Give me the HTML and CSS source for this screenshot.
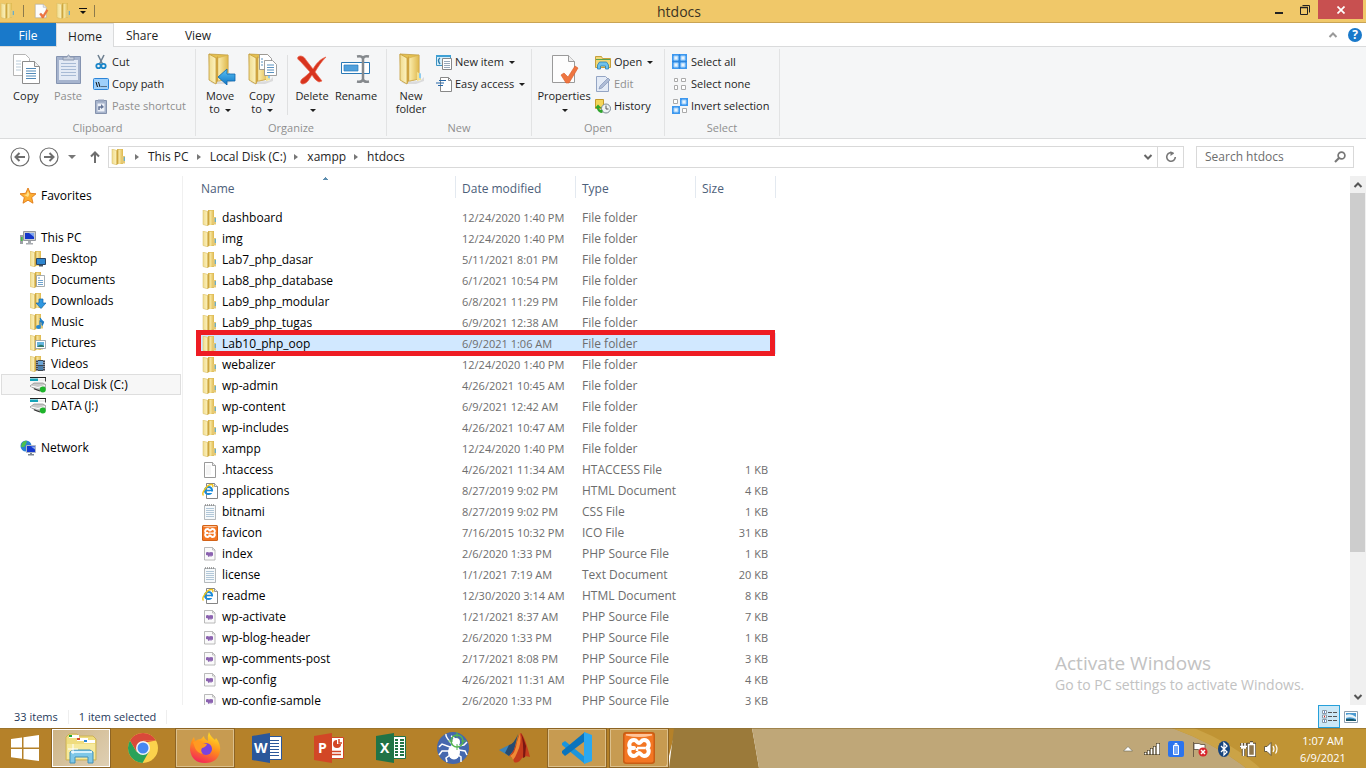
FILE: index.html
```html
<!DOCTYPE html>
<html lang="en">
<head>
  <meta charset="UTF-8" />
  <title>htdocs</title>
  <link rel="stylesheet" href="styles.css">
</head>
<body>
  <!-- shared icons -->
  <svg class="sprite" aria-hidden="true">
    <defs>
      <linearGradient id="gold" x1="0" x2="1" y1="0" y2="0">
        <stop offset="0" stop-color="#fbeeb0"/><stop offset="1" stop-color="#dfb84c"/>
      </linearGradient>
      <linearGradient id="pale" x1="0" x2="1" y1="0" y2="0">
        <stop offset="0" stop-color="#f0dc90"/><stop offset="1" stop-color="#fdf3bf"/>
      </linearGradient>
      <linearGradient id="blue" x1="0" x2="0" y1="0" y2="1">
        <stop offset="0" stop-color="#5cc4f5"/><stop offset="1" stop-color="#0f74c4"/>
      </linearGradient>
      <linearGradient id="fire" x1="0.7" x2="0.3" y1="0" y2="1">
        <stop offset="0" stop-color="#ffe226"/><stop offset="0.5" stop-color="#ff8a1c"/><stop offset="1" stop-color="#f4235a"/>
      </linearGradient>
    </defs>
    <symbol id="folder" viewBox="0 0 16 16">
      <path d="M1 1h6v13H1z" fill="#e3c663"/>
      <path d="M6 0h6v15H6z" fill="#d9b54c"/>
      <path d="M1 0l5 1.500V16l-5-1.500z" fill="url(#pale)" stroke="#d6b95f" stroke-width=".5"/>
      <path d="M5.500 2L7.500.8v13.400L5.500 16z" fill="#cda63f"/>
      <path d="M7.500.8L12 .3v14l-4.500.9z" fill="url(#gold)"/>
      <path d="M11 7h3v7.500h-3z" fill="#e5c976"/>
      <path d="M12.800 8h1v4h-1z" fill="#4ba6dc"/>
    </symbol>
    <symbol id="bigfolder" viewBox="0 0 32 32">
      <path d="M6 29l19-1 4-4v4l-8 3H10z" fill="#c9c9c9" opacity=".6"/>
      <path d="M5 1l19 1v24l-9 2L6 26z" fill="#e4c050" stroke="#bb9534" stroke-width=".7"/>
      <path d="M14 5l10-3v24l-10 2z" fill="url(#gold)" stroke="#cda648" stroke-width=".5"/>
      <path d="M5 1l7 4v26l-7-4z" fill="url(#pale)" stroke="#c49c38" stroke-width=".8"/>
      <path d="M12 5l2-2v25l-2 3z" fill="#cfa440"/>
      <path d="M22 19l4 2v6l-4 1z" fill="#f5e190"/>
      <path d="M24 20l2 .6v5l-2-.6z" fill="#8dcbf0"/>
    </symbol>
    <symbol id="page" viewBox="0 0 16 16">
      <path d="M2.500.5h8l3 3v12h-11z" fill="#fff" stroke="#8f8f8f" stroke-width=".9"/>
      <path d="M10.500.5v3h3" fill="#eee" stroke="#8f8f8f" stroke-width=".8"/>
      <path d="M4 3h5v10H4z" fill="#f5f5f5"/>
    </symbol>
    <symbol id="text" viewBox="0 0 16 16">
      <path d="M2.500 1.500h11v14h-11z" fill="#f6f9fb" stroke="#a2a7ab" stroke-width=".8"/>
      <path d="M3 1h10" stroke="#888" stroke-width="1.500" stroke-dasharray="1 1"/>
      <path d="M4 4.500h8M4 6.500h8M4 8.500h8M4 10.500h8M4 12.500h8" stroke="#a9c1d4" stroke-width=".9"/>
    </symbol>
    <symbol id="html" viewBox="0 0 16 16">
      <path d="M4.500.5h8l3 3v12h-11z" fill="#fff" stroke="#777" stroke-width=".9"/>
      <path d="M12.500.5v3h3" fill="#eee" stroke="#777" stroke-width=".7"/>
      <circle cx="6.500" cy="7.500" r="3.600" fill="none" stroke="#1a8ad8" stroke-width="2"/>
      <path d="M3 7.500h7" stroke="#1a8ad8" stroke-width="1.600"/>
      <path d="M8 8.500h4v1.500H8z" fill="#fff"/>
      <path d="M1.500 12.500C-1 10 5 1.500 9.500 1.500c1.700 0 1.700 1.600 1 2.800" fill="none" stroke="#f2c51a" stroke-width="1.400"/>
    </symbol>
    <symbol id="xampp" viewBox="0 0 32 32">
      <rect x="0" y="0" width="32" height="32" rx="3" fill="#c95d14"/>
      <rect x="1.500" y="1.500" width="29" height="29" rx="2" fill="#f37623"/>
      <path d="M3 2h26v1.500q-13 3-26 0z" fill="#ffc59b"/>
      <path d="M11 16H8c-3-2-2-8 3-8 3 0 3 3 5 3s2-3 5-3c5 0 6 6 3 8 3 2 2 8-3 8-3 0-3-3-5-3s-2 3-5 3c-5 0-6-6-3-8z" fill="none" stroke="#fff" stroke-width="4" stroke-linejoin="round"/>
      <path d="M14 16h8M14 16v3" stroke="#fff" stroke-width="2.500"/>
    </symbol>
    <symbol id="php" viewBox="0 0 16 16">
      <path d="M2.500 1.500h8l2.500 2.500v10h-10.500z" fill="#fafafa" stroke="#a8a8a8" stroke-width=".8"/>
      <path d="M10.500 1.500v2.500H13" fill="none" stroke="#a8a8a8" stroke-width=".7"/>
      <path d="M4 6.500q1.500-1 3 0 2-1 4 0v3.300H9.500v1h-1v-1h-1v1H6v-1.300L4 9z" fill="#8b62b0"/>
    </symbol>
    <symbol id="drive" viewBox="0 0 16 16">
      <path d="M0 .5h16" stroke="#222" stroke-width="1"/>
      <path d="M0 2h16v2H0z" fill="#eee"/>
      <path d="M15.500 1v3.500" stroke="#444"/>
      <path d="M0 1.500h8v2.500H0z" fill="#16a3b8"/>
      <path d="M0 9l4-3h9l3 2v3l-5 2H7z" fill="#c9c9c9" stroke="#777" stroke-width=".6"/>
      <path d="M1 9l7 1.500L15 8.500" fill="none" stroke="#fff"/>
      <path d="M4 11.800l6 2.200" stroke="#333" stroke-width="1.200"/>
      <circle cx="12.800" cy="12.500" r="3" fill="#1eb32b"/>
    </symbol>
    <symbol id="propdoc" viewBox="0 0 32 32">
      <path d="M4.500 2.500h16l6 6v21h-22z" fill="#fdfdfd" stroke="#9a9a9a"/>
      <path d="M20.500 2.500v6h6" fill="#eee" stroke="#9a9a9a"/>
      <path d="M13 22l3-2 4 4 7-11 3 2-9 15h-3z" fill="#ee7540" stroke="#d95a26" stroke-width=".6"/>
    </symbol>
  </svg>

  <header class="titlebar">
    <div class="quick">
      <svg class="i16" viewBox="0 0 16 16"><use href="#folder"/></svg>
      <i class="tick"></i>
      <button aria-label="Properties"><svg class="i16"><use href="#propdoc"/></svg></button>
      <button aria-label="New folder"><svg class="i16"><use href="#folder"/></svg></button>
      <button aria-label="Customize"><svg class="mini" viewBox="0 0 8 8"><path d="M0 1.500h8" stroke="#111"/><path d="M1 4h6L4 7z" fill="#111"/></svg></button>
      <i class="tick"></i>
    </div>
    <h1 class="caption">htdocs</h1>
    <div class="window-buttons">
      <button aria-label="Minimize"><svg width="10" height="10" viewBox="0 0 10 10"><path d="M1 7h8v2H1z" fill="#222"/></svg></button>
      <button aria-label="Restore"><svg width="10" height="10" viewBox="0 0 10 10"><path d="M.5 2.500h7v7h-7zM2.500.5h7v7" fill="none" stroke="#222"/><path d="M0 2.500h8" stroke="#222" stroke-width="1.500"/></svg></button>
      <button class="close" aria-label="Close"><svg width="8" height="8" viewBox="0 0 8 8"><path d="M.5.5l7 7M7.500.5l-7 7" stroke="#fff" stroke-width="1.700"/></svg></button>
    </div>
  </header>

  <nav class="tabs">
    <button class="tab file">File</button>
    <button class="tab active">Home</button>
    <button class="tab">Share</button>
    <button class="tab">View</button>
    <div class="tabs-right">
      <button aria-label="Collapse ribbon"><svg width="10" height="8" viewBox="0 0 10 8"><path d="M1.500 6L5 2.500 8.500 6" fill="none" stroke="#999" stroke-width="2"/></svg></button>
      <button class="help" aria-label="Help">?</button>
    </div>
  </nav>

  <section class="ribbon">
    <div class="group clipboard">
      <div class="tools">
        <button class="big">
          <svg viewBox="0 0 32 32"><g fill="#fff" stroke="#8c8c8c"><path d="M3.500 1.500h12l4 4v17h-16z" stroke="#b5b5b5"/><path d="M12.500 8.500h12l5 5v17h-17z"/><path d="M24.500 8.500v5h5" fill="#eee"/></g><path d="M6 8h5M6 11h5M6 14h5M6 17h5" stroke="#b9cbd9"/><path d="M16 15.500h10M16 18h10M16 20.500h10M16 23h10M16 25.500h10" stroke="#5089b8"/></svg>
          <span>Copy</span>
        </button>
        <button class="big" disabled>
          <svg viewBox="0 0 32 32"><path d="M4.500 3.500h24v27h-24z" fill="#a6b4ce" stroke="#8594b1"/><path d="M7 7h19v20H7z" fill="#e3eaf5"/><path d="M9 10.500h15M9 13.500h15M9 16.500h15M9 19.500h15M9 22.500h15" stroke="#a7bad5"/><path d="M11 4h4q1.500-4 3 0h4v3H11z" fill="#c5cddb" stroke="#8b98b0"/></svg>
          <span>Paste</span>
        </button>
        <div class="stack">
          <button class="small"><svg viewBox="0 0 16 16"><path d="M5 1l4.500 9M11 1L6.500 10" stroke="#6f8191" stroke-width="1.600"/><circle cx="5.500" cy="12" r="2.200" fill="none" stroke="#1b86c9" stroke-width="1.800"/><circle cx="10.500" cy="12" r="2.200" fill="none" stroke="#1b86c9" stroke-width="1.800"/></svg>Cut</button>
          <button class="small"><svg viewBox="0 0 16 16"><rect x=".5" y="2.500" width="15" height="11" rx="1" fill="#9ed0fb" stroke="#2b84d8"/><path d="M3 6l1.500 5M5.500 6L7 11" stroke="#111"/><path d="M8.500 10.500h1M10.500 10.500h1M12.500 10.500h1" stroke="#111"/></svg>Copy path</button>
          <button class="small" disabled><svg viewBox="0 0 16 16"><path d="M2.500 2.500h11v13h-11z" fill="#a7b4cc" stroke="#8492ad"/><path d="M4.500 5.500h7v8h-7z" fill="#edf1f8"/><path d="M5 1.500h6v2H5z" fill="#95a3bd"/><path d="M6 12V9h3" fill="none" stroke="#657698" stroke-width="1.500"/><path d="M8 6l3 3-3 2z" fill="#657698"/></svg>Paste shortcut</button>
        </div>
      </div>
      <h2>Clipboard</h2>
    </div>

    <div class="group organize">
      <div class="tools">
        <button class="big">
          <svg viewBox="0 0 32 32"><use href="#bigfolder"/><path d="M14 24l9-8v5h8v7h-8v4z" fill="url(#blue)" stroke="#0c65ad" stroke-width=".8"/></svg>
          <span>Move<br>to <i class="caret"></i></span>
        </button>
        <button class="big">
          <svg viewBox="0 0 32 32"><use href="#bigfolder" x="-2"/><g fill="#fff" stroke="#888" stroke-width=".8"><path d="M13.500 1.500h8l4 4v11h-12z"/><path d="M18.500 7.500h8l4 4v11h-12z"/></g><path d="M21 12h7M21 14.500h7M21 17h7M21 19.500h7M15 6h2M15 9h2M15 12h2" stroke="#5b92c0"/></svg>
          <span>Copy<br>to <i class="caret"></i></span>
        </button>
        <i class="rule"></i>
        <button class="big">
          <svg viewBox="0 0 32 32"><path d="M2 4c2-2 6-1 8 3l7 9c3-5 7-10 13-12-5 5-8 10-11 15l7 9-3 1c-4-2-5-4-7-7-3 4-4 8-9 9-3 0-3-3-1-5 3-2 6-5 8-7L4 8C2 7 1 5 2 4z" fill="#d8341e" stroke="#e9664d" stroke-width=".7"/></svg>
          <span>Delete<br><i class="caret"></i></span>
        </button>
        <button class="big">
          <svg viewBox="0 0 32 32"><path d="M1.500 9.500h28v11h-28z" fill="#fff" stroke="#2a78b5"/><path d="M4 12h14v6H4z" fill="#4fa0dc" stroke="#2d7dbb" stroke-width=".7"/><path d="M17 3.500q5-1 6 2 1-3 6-2M17 28.500q5 1 6-2 1 3 6 2M23 5v22" fill="none" stroke="#85898d" stroke-width="2.500"/></svg>
          <span>Rename</span>
        </button>
      </div>
      <h2>Organize</h2>
    </div>

    <div class="group new">
      <div class="tools">
        <button class="big">
          <svg viewBox="0 0 32 32"><use href="#bigfolder"/></svg>
          <span>New<br>folder</span>
        </button>
        <div class="stack">
          <button class="small"><svg viewBox="0 0 16 16"><path d="M.5 1.500h14v10H.5z" fill="#d5effb" stroke="#3e94c4"/><path d="M0 1h15v2H0z" fill="#3fa0d4"/><path d="M4 4q-3 2 0 6" fill="none" stroke="#2c7baa" stroke-width="1.500"/><path d="M6.500 4.500h9v11h-9z" fill="#fff" stroke="#888"/><path d="M8 7.500h6M8 9.500h6M8 11.500h6M8 13.500h6" stroke="#9ab"/></svg>New item <i class="caret"></i></button>
          <button class="small"><svg viewBox="0 0 16 16"><path d="M4.500 1.500h8l3 3v11h-11z" fill="#fff" stroke="#888"/><path d="M12.500 1.500v3h3" fill="none" stroke="#888"/><path d="M3 4.500h7M0 7h8M2 9.500h5" stroke="#2667a8" stroke-width="1.200"/></svg>Easy access <i class="caret"></i></button>
        </div>
      </div>
      <h2>New</h2>
    </div>

    <div class="group open">
      <div class="tools">
        <button class="big wide">
          <svg viewBox="0 0 32 32"><use href="#propdoc"/></svg>
          <span>Properties<br><i class="caret"></i></span>
        </button>
        <div class="stack">
          <button class="small"><svg viewBox="0 0 16 16"><path d="M.5 2.500h6l1 2h8v9H.5z" fill="#f1d878" stroke="#c7a03c"/><path d="M1 5.500h14" stroke="#5ba352"/><path d="M2.500 15v-4l2-3h7l2 3v4h-3v-3h-5v3z" fill="#6ec1ec" stroke="#2a80b6" stroke-width=".8"/></svg>Open <i class="caret"></i></button>
          <button class="small" disabled><svg viewBox="0 0 16 16"><path d="M1.500.5h9l3 3v12h-12z" fill="#e4ebf6" stroke="#94a5c4"/><path d="M4 13l1-3 8-8 2 2-8 8z" fill="#aebcd6" stroke="#8395b7" stroke-width=".7"/></svg>Edit</button>
          <button class="small"><svg viewBox="0 0 16 16"><path d="M.5 1.500h8v9h-8z" fill="#f3d559" stroke="#c59a2b"/><circle cx="11" cy="10.500" r="4.500" fill="#eef3f6" stroke="#778791"/><path d="M11 7.500v3.500h2.500" fill="none" stroke="#555"/><path d="M1 9h2.500q0 3 4 3v3q-5 0-6-6M0 10l3-3.500L6.500 10z" fill="#2fa42d"/></svg>History</button>
        </div>
      </div>
      <h2>Open</h2>
    </div>

    <div class="group select">
      <div class="tools">
        <div class="stack">
          <button class="small"><svg viewBox="0 0 16 16"><path d="M0 0h15v15H0z" fill="#3d98ef"/><g fill="#e8f4fe" stroke="#9ccdf8"><path d="M2 2h4v4H2zM9 2h4v4H9zM2 9h4v4H2zM9 9h4v4H9z"/></g><path d="M7.500 0v15M0 7.500h15" stroke="#2f86dc"/></svg>Select all</button>
          <button class="small"><svg viewBox="0 0 16 16"><path d="M2.500 2.500h3v3h-3zM9.500 2.500h4v3h-4zM2.500 9.500h3v4h-3zM9.500 9.500h4v4h-4z" fill="#fff" stroke="#aaa"/></svg>Select none</button>
          <button class="small"><svg viewBox="0 0 16 16"><path d="M8 0h8v8H8zM0 8h8v8H0z" fill="#3d98ef"/><path d="M10 2h4v4h-4zM2 10h4v4H2z" fill="#e8f4fe" stroke="#9ccdf8"/><path d="M1.500 1.500h4v4h-4zM10.500 10.500h4v4h-4z" fill="#fff" stroke="#aaa"/></svg>Invert selection</button>
        </div>
      </div>
      <h2>Select</h2>
    </div>
  </section>

  <div class="addressbar">
    <button aria-label="Back"><svg width="20" height="20" viewBox="0 0 20 20"><circle cx="10" cy="10" r="9" fill="#fff" stroke="#6e6e6e" stroke-width="1.200"/><path d="M15 10H6M9.500 6L5.500 10l4 4" fill="none" stroke="#6e6e6e" stroke-width="2"/></svg></button>
    <button aria-label="Forward"><svg width="20" height="20" viewBox="0 0 20 20"><circle cx="10" cy="10" r="9" fill="#fff" stroke="#6e6e6e" stroke-width="1.200"/><path d="M5 10h9M10.500 6l4 4-4 4" fill="none" stroke="#6e6e6e" stroke-width="2"/></svg></button>
    <button aria-label="Recent locations"><svg width="8" height="8" viewBox="0 0 8 8"><path d="M0 2h8L4 6z" fill="#777"/></svg></button>
    <button class="up" aria-label="Up"><svg width="12" height="14" viewBox="0 0 12 14"><path d="M6 13V3M2 6.500L6 2.500l4 4" fill="none" stroke="#6e6e6e" stroke-width="2"/></svg></button>
    <div class="path">
      <svg class="i16"><use href="#folder"/></svg>
      <i class="crumb-arrow"></i><a href="#">This PC</a>
      <i class="crumb-arrow"></i><a href="#">Local Disk (C:)</a>
      <i class="crumb-arrow"></i><a href="#">xampp</a>
      <i class="crumb-arrow"></i><a href="#">htdocs</a>
      <button class="history" aria-label="Previous locations"><svg width="10" height="8" viewBox="0 0 10 8"><path d="M1.500 2L5 5.500 8.500 2" fill="none" stroke="#666" stroke-width="2"/></svg></button>
      <button class="refresh" aria-label="Refresh"><svg width="12" height="12" viewBox="0 0 12 12"><path d="M8.500 2.500A4.300 4.300 0 1 0 10.300 6" fill="none" stroke="#777" stroke-width="1.600"/><path d="M5.500 0v5L9 2.500z" fill="#777"/></svg></button>
    </div>
    <div class="search">
      <input type="text" aria-label="Search" placeholder="Search htdocs">
      <svg width="12" height="12" viewBox="0 0 12 12"><circle cx="7.500" cy="4.500" r="3.400" fill="none" stroke="#777" stroke-width="1.700"/><path d="M5 7L1 11" stroke="#777" stroke-width="2.200"/></svg>
    </div>
  </div>

  <main class="content">
    <aside class="sidebar">
      <a class="root" href="#"><svg viewBox="0 0 16 16"><path d="M8 0l2.300 5.300 5.700.5-4.300 3.700 1.300 5.700L8 12.200 3 15.200l1.300-5.700L0 5.800l5.700-.5z" fill="#fcae33" stroke="#e07b17" stroke-width=".9"/><path d="M8 3l1.300 3.500L8 9 4 7l2.500-.5z" fill="#ffe08a"/></svg>Favorites</a>

      <a class="root" href="#"><svg viewBox="0 0 16 16"><path d="M3.500 1.500h12v9h-12z" fill="#c9ccd0" stroke="#96999e"/><path d="M5 3h9v6H5z" fill="#1436c9"/><path d="M9 3h5v4z" fill="#7fa5f0"/><path d="M8 11h3v2h2v1.500H6V13h2z" fill="#a7abb0"/><path d="M0 5h3v9H0z" fill="#9ba0a5"/><path d="M1 7h1.500v4H1z" fill="#3fc13c"/></svg>This PC</a>
      <a href="#"><svg viewBox="0 0 16 16"><use href="#folder" x="-1"/><path d="M6.500 7.500h9v6h-9z" fill="#2f86cf" stroke="#2c4563"/><path d="M9 14h4v1.500H9z" fill="#456"/></svg>Desktop</a>
      <a href="#"><svg viewBox="0 0 16 16"><use href="#folder" x="-1"/><path d="M6.500 3.500h8v11h-8z" fill="#fff" stroke="#9099a0" stroke-width=".8"/><path d="M8 6h2M8 8.500h5M8 10.500h5M8 12.500h5" stroke="#6fa3ce"/></svg>Documents</a>
      <a href="#"><svg viewBox="0 0 16 16"><use href="#folder" x="-1"/><path d="M9 6h4v4h3l-5 5.500L6 10h3z" fill="#2e97e0" stroke="#1665ab" stroke-width=".7"/></svg>Downloads</a>
      <a href="#"><svg viewBox="0 0 16 16"><use href="#folder" x="-1"/><path d="M10 4q1 2 3.500 4-.5 2-1.500 3 1-3-2-4v5" fill="#2e97e0" stroke="#1d78c2" stroke-width="1.200"/><ellipse cx="8.500" cy="13" rx="2.500" ry="2" fill="#2388d4"/></svg>Music</a>
      <a href="#"><svg viewBox="0 0 16 16"><use href="#folder" x="-1"/><path d="M5.500 5.500h10v8h-10z" fill="#fff" stroke="#8e979f" stroke-width=".8"/><path d="M7 7h7v5H7z" fill="#66b5df"/><path d="M7 12q3-4 7-1v1z" fill="#2f7a6b"/></svg>Pictures</a>
      <a href="#"><svg viewBox="0 0 16 16"><use href="#folder" x="-1"/><path d="M6 4h9v11H6z" fill="#3c4650"/><path d="M8 5h5v4H8z" fill="#6ba5d6"/><path d="M8 10h5v4H8z" fill="#4c80ad"/><path d="M7 4v11M14 4v11" stroke="#dde" stroke-dasharray="1 1"/></svg>Videos</a>
      <a class="current" href="#"><svg><use href="#drive"/></svg>Local Disk (C:)</a>
      <a href="#"><svg><use href="#drive"/></svg>DATA (J:)</a>

      <a class="root" href="#"><svg viewBox="0 0 16 16"><circle cx="6" cy="6" r="5.500" fill="#2a7fd4"/><path d="M2 3q3-3 5-2l-1 3-2 3-3 0zM6 8l3-2 1 3-3 2z" fill="#4dc04d"/><path d="M6.500 5.500h9v7h-9z" fill="#1638cf" stroke="#b0b8c4"/><path d="M10 13h2v1h2v1.500H8V14h2z" fill="#7b8693"/><path d="M11 6.500h4v3z" fill="#89a9ef"/></svg>Network</a>
    </aside>

    <div class="files">
      <table>
        <thead>
          <tr><th class="name" aria-sort="ascending">Name</th><th class="date">Date modified</th><th class="type">Type</th><th class="size">Size</th></tr>
        </thead>
        <tbody id="rows"></tbody>
      </table>
      <div class="watermark">
        <p class="big-line">Activate Windows</p>
        <p>Go to PC settings to activate Windows.</p>
      </div>
    </div>

    <div class="scrollbar">
      <button aria-label="Scroll up"><svg width="10" height="8" viewBox="0 0 10 8"><path d="M1.500 6L5 2.500 8.500 6" fill="none" stroke="#555" stroke-width="2"/></svg></button>
      <div class="thumb"></div>
      <div class="track"></div>
      <button aria-label="Scroll down"><svg width="10" height="8" viewBox="0 0 10 8"><path d="M1.500 2L5 5.500 8.500 2" fill="none" stroke="#555" stroke-width="2"/></svg></button>
    </div>
  </main>

  <footer class="status">
    <span>33 items</span>
    <span>1 item selected</span>
    <div class="views">
      <button class="on" aria-label="Details view"><svg width="16" height="14" viewBox="0 0 16 14"><path d="M1.500.5h4v3h-4zM1.500 5h4v3h-4zM1.500 9.500h4v3h-4z" fill="#fff" stroke="#8a9aa6"/><path d="M3 2h1M3 11h1" stroke="#2a62b5" stroke-width="1.500"/><path d="M3 6.500h1" stroke="#c22" stroke-width="1.500"/><path d="M7 2.500h4M12 2.500h4M7 6.500h4M12 6.500h4M7 10.500h4M12 10.500h4" stroke="#555"/></svg></button>
      <button aria-label="Large icons view"><svg width="14" height="12" viewBox="0 0 14 12"><path d="M.5.5h13v11H.5z" fill="#fff" stroke="#8fa0b0"/><path d="M2 2h10v8H2z" fill="#4c9bd2"/><path d="M2 4q5-2 10 2v2q-5-3-10-1z" fill="#e8f4fa"/><path d="M2 8q5-1 10 1v1H2z" fill="#175568"/></svg></button>
    </div>
  </footer>

  <div class="taskbar">
    <svg class="wallpaper" viewBox="0 0 1366 40" preserveAspectRatio="none" aria-hidden="true">
      <path d="M0 0h676l-10 40H0z" fill="#b58129"/>
      <path d="M674 0h78l7 40h-90z" fill="#9b7a3a"/>
      <path d="M752 0h440l60 40H759z" fill="#bfa778"/>
      <path d="M1172 0h194v40h-120q-30-24-74-40z" fill="#c09434"/>
      <path d="M1172 0h22q40 16 66 40h-14q-30-24-74-40z" fill="#cba346"/>
      <path d="M0 .5h1366" stroke="#8c6c30" stroke-opacity=".6"/>
    </svg>
    <button class="start" aria-label="Start"><svg width="28" height="26" viewBox="0 0 28 26"><path d="M0 4l11-1.600V12.500H0zM12.500 2.200L28 0v12.500H12.500zM0 14h11v9.700L0 22.200zM12.500 14H28v12l-15.500-2.100z" fill="#fff"/></svg></button>
    <button class="app front" aria-label="File Explorer"><svg viewBox="0 0 32 32"><path d="M1 5l3-3h8l2 2h14l3 3v21H1z" fill="#efdc7e" stroke="#c8ab4a" stroke-width=".8"/><path d="M4 3h10v3H4zM12 6h11v3H12zM19 8h11v3H19z" fill="#fff"/><path d="M4 3h3v2H4z" fill="#23a83a"/><path d="M12 6h3v2h-3z" fill="#d5432a"/><path d="M19 8h3v2h-3z" fill="#2b86d3"/><path d="M2 12h28v15H2z" fill="#f6e99c"/><path d="M5 31V20l3-2h17l3 2v11h-5v-6H10v6z" fill="#7fc8e8" stroke="#4291b8"/><path d="M6 20h21" stroke="#d8f2fc" stroke-width="2"/><path d="M8 12v10M3 17h10" stroke="#fff"/></svg></button>
    <button class="app" aria-label="Chrome"><svg viewBox="0 0 32 32"><circle cx="16" cy="16" r="15" fill="#fbd24c"/><path d="M16 16L3 8.500A15 15 0 0 1 29 8.500H16z" fill="#d9493a"/><path d="M3 8.500A15 15 0 0 0 15.500 31L22 19.500 16 16 9.500 19.700z" fill="#2aa25a"/><path d="M3 8.500l6.500 11 3-8L29 8.500z" fill="#d9493a"/><circle cx="16" cy="16" r="7" fill="#f5f5f5"/><circle cx="16" cy="16" r="5.500" fill="#4688f1"/></svg></button>
    <button class="app running" aria-label="Firefox"><svg viewBox="0 0 32 32"><path d="M20 0q1 4 6 8l1-2q5 6 4 13-2 12-15 12T1 18Q1 10 5 5l1 4q3-2 6-2l3-3q0 3 4 5-1-5 1-9z" fill="url(#fire)"/><circle cx="17" cy="17" r="6" fill="#7a43dd"/><path d="M4 10q7-3 9 1l5 1q-1 3-5 4-2 3 1 6-6-1-8-6z" fill="#ff9a22"/></svg></button>
    <button class="app" aria-label="Word"><svg viewBox="0 0 32 32"><path d="M15.500 4.500h15v23h-15z" fill="#fff" stroke="#2b579a"/><path d="M19 8.500h9M19 11.500h9M19 14.500h9M19 17.500h9M19 20.500h9M19 23.500h9" stroke="#2b579a"/><path d="M1 4l18-3v30L1 28z" fill="#2b579a"/><text x="3" y="21" class="glyph">W</text></svg></button>
    <button class="app" aria-label="PowerPoint"><svg viewBox="0 0 32 32"><path d="M15.500 5.500h15v21h-15z" fill="#fff" stroke="#d24726"/><path d="M20 12a4 4 0 1 0 8 0h-4V8q-4 0-4 4z" fill="#d24726"/><path d="M26 7v4h3M19 19.500h9M19 22.500h9" stroke="#d24726" stroke-width="1.500" fill="none"/><path d="M1 4l18-3v30L1 28z" fill="#d24726"/><text x="5" y="21" class="glyph">P</text></svg></button>
    <button class="app" aria-label="Excel"><svg viewBox="0 0 32 32"><path d="M15.500 4.500h15v22h-15z" fill="#fff" stroke="#217346"/><path d="M20 8h3M20 11h3M20 14h3M20 17h3M20 20h3M20 23h3M25 8h4M25 11h4M25 14h4M25 17h4M25 20h4M25 23h4" stroke="#217346" stroke-width="1.800"/><path d="M1 4l18-3v30L1 28z" fill="#217346"/><text x="5" y="21" class="glyph">X</text></svg></button>
    <button class="app" aria-label="Bug tool"><svg viewBox="0 0 32 32"><circle cx="16" cy="16" r="16" fill="#4568ae"/><path d="M16 13Q8 5 9 2M19 12q0-6-5-8M13 15L5 12 2 15M12 19H5l-3 4M13 23l-4 3 1 4M21 14l6-1 3-3M22 18l6 1 2 4M21 23l3 2v5" fill="none" stroke="#fff" stroke-width="1.500"/><ellipse cx="17" cy="20" rx="6" ry="7.500" fill="#fff"/><circle cx="19" cy="10" r="4" fill="#fff"/><circle cx="20" cy="9" r="6" fill="none" stroke="#55b64f" stroke-width="1.500"/><path d="M20 0v6M20 12v6M11 9h5M24 9h5" stroke="#55b64f"/></svg></button>
    <button class="app" aria-label="MATLAB"><svg viewBox="0 0 32 32"><path d="M0 18l10-5 5 5-5 6z" fill="#3a83b8"/><path d="M10 13q5-1 9-11l-4 16-5 6-4-3z" fill="#274b70"/><path d="M10 24q4-2 8-15 2-8 4-8 4 4 9 24-5-2-8 1-4 6-8 4-1-5-5-6z" fill="#c43c1c"/><path d="M21 1q2 10-3 20-2 5-4 7-1-3-3-4 5-2 7-14z" fill="#f08a35"/><path d="M22 1q3 6 5 13l-1 11-2 1q1-15-2-25z" fill="#7b1712"/></svg></button>
    <button class="app running" aria-label="Visual Studio Code"><svg viewBox="0 0 32 32"><path d="M1 11l3-2 20 16v7L1 13z" fill="#1b95dd"/><path d="M1 21l3 3L24 9V0L1 19z" fill="#0a74bd"/><path d="M23 0l8 3v26l-8 3z" fill="#2ba8f0"/></svg></button>
    <button class="app running" aria-label="XAMPP"><svg><use href="#xampp"/></svg></button>

    <div class="tray">
      <button aria-label="Show hidden icons"><svg viewBox="0 0 16 16"><path d="M3.500 10L8 5.500l4.500 4.500z" fill="#fff" stroke="#665" stroke-width=".6"/></svg></button>
      <button aria-label="Network"><svg viewBox="0 0 16 16"><path d="M0 11h3v3H0zM3 9h3v5H3zM6 7h3v7H6zM9 5h3v9H9zM12 2h4v12h-4z" fill="#5c5138"/><path d="M1 12h1v1H1zM4 10h1v3H4zM7 8h1v5H7zM10 6h1v7h-1zM13 3h2v10h-2z" fill="#fff" stroke="#fff" stroke-width=".6"/></svg></button>
      <button aria-label="Power manager"><svg viewBox="0 0 16 16"><rect width="16" height="16" rx="2" fill="#2c74ee"/><path d="M5.500 4.500h5v9h-5zM7 2.500h2v2H7z" fill="#7aa9f7" stroke="#fff"/></svg></button>
      <button aria-label="Action Center"><svg viewBox="0 0 16 16"><path d="M1.500 1v15M2 2.500h5l2 1h4v6H8l-2-1H2z" fill="#fff" stroke="#5c4c3c" stroke-width=".8"/><circle cx="11" cy="11" r="4.500" fill="#d8262c"/><path d="M9 9l4 4M13 9l-4 4" stroke="#fff" stroke-width="1.500"/></svg></button>
      <button aria-label="Bluetooth"><svg viewBox="0 0 16 16"><ellipse cx="8" cy="8" rx="6" ry="8" fill="#17457e"/><path d="M5 5l6 6-3 3V2l3 3-6 6" fill="none" stroke="#fff" stroke-width="1.300"/></svg></button>
      <button aria-label="Battery"><svg viewBox="0 0 16 16"><g fill="none" stroke="#5c4c32" stroke-width="3.400"><path d="M8.500 3.500h6v11h-6zM10 1.500h3M2 2v3M5 2v3M0 5.500h7M3.500 8v7"/></g><path d="M8.500 3.500h6v11h-6zM10 2h3" fill="#8d754c" stroke="#fff" stroke-width="1.500"/><path d="M2 2v3M5 2v3M0 5.500h7M1 7h5M3.500 8v7" stroke="#fff" stroke-width="1.500"/></svg></button>
      <button aria-label="Volume"><svg viewBox="0 0 16 16"><path d="M.5 5.500H3l4-4v13l-4-4H.5z" fill="#fff" stroke="#5c5138" stroke-width=".9"/><path d="M9 5q2 3 0 6M11.500 3.500q3 4.500 0 9" fill="none" stroke="#fff" stroke-width="1.200"/></svg></button>
      <div class="clock"><time>1:07 AM</time><time>6/9/2021</time></div>
    </div>
  </div>

  <script>
    const files = [
      ["folder", "dashboard", "12/24/2020 1:40 PM", "File folder", ""],
      ["folder", "img", "12/24/2020 1:40 PM", "File folder", ""],
      ["folder", "Lab7_php_dasar", "5/11/2021 8:01 PM", "File folder", ""],
      ["folder", "Lab8_php_database", "6/1/2021 10:54 PM", "File folder", ""],
      ["folder", "Lab9_php_modular", "6/8/2021 11:29 PM", "File folder", ""],
      ["folder", "Lab9_php_tugas", "6/9/2021 12:38 AM", "File folder", ""],
      ["folder", "Lab10_php_oop", "6/9/2021 1:06 AM", "File folder", ""],
      ["folder", "webalizer", "12/24/2020 1:40 PM", "File folder", ""],
      ["folder", "wp-admin", "4/26/2021 10:45 AM", "File folder", ""],
      ["folder", "wp-content", "6/9/2021 12:42 AM", "File folder", ""],
      ["folder", "wp-includes", "4/26/2021 10:47 AM", "File folder", ""],
      ["folder", "xampp", "12/24/2020 1:40 PM", "File folder", ""],
      ["page", ".htaccess", "4/26/2021 11:34 AM", "HTACCESS File", "1 KB"],
      ["html", "applications", "8/27/2019 9:02 PM", "HTML Document", "4 KB"],
      ["text", "bitnami", "8/27/2019 9:02 PM", "CSS File", "1 KB"],
      ["xampp", "favicon", "7/16/2015 10:32 PM", "ICO File", "31 KB"],
      ["php", "index", "2/6/2020 1:33 PM", "PHP Source File", "1 KB"],
      ["text", "license", "1/1/2021 7:19 AM", "Text Document", "20 KB"],
      ["html", "readme", "12/30/2020 3:14 AM", "HTML Document", "8 KB"],
      ["php", "wp-activate", "1/21/2021 8:37 AM", "PHP Source File", "7 KB"],
      ["php", "wp-blog-header", "2/6/2020 1:33 PM", "PHP Source File", "1 KB"],
      ["php", "wp-comments-post", "2/17/2021 8:08 PM", "PHP Source File", "3 KB"],
      ["php", "wp-config", "4/26/2021 11:31 AM", "PHP Source File", "4 KB"],
      ["php", "wp-config-sample", "2/6/2020 1:33 PM", "PHP Source File", "3 KB"]
    ];

    const selected = "Lab10_php_oop";

    document.getElementById("rows").innerHTML = files.map(([icon, name, date, type, size]) => `
      <tr class="${name === selected ? "selected" : ""}">
        <td class="name"><div class="entry"><svg><use href="#${icon}"/></svg>${name}</div></td>
        <td class="date">${date}</td>
        <td>${type}</td>
        <td class="size">${size}</td>
      </tr>`).join("");
  </script>
</body>
</html>
```
FILE: styles.css
```css
* {
  box-sizing: border-box;
}

body {
  margin: 0;
  height: 100vh;
  display: flex;
  flex-direction: column;
  overflow: hidden;
  background: #fff;
  color: #1e1e1e;
  font: 12px/14px "Open Sans", "Noto Sans", sans-serif;
}

button {
  margin: 0;
  padding: 0;
  border: 0;
  background: none;
  font: inherit;
  color: inherit;
  display: flex;
  align-items: center;
  justify-content: center;
}

a {
  color: inherit;
  text-decoration: none;
}

h1, h2, p {
  margin: 0;
  font-weight: normal;
}

svg {
  flex: none;
}

.sprite {
  position: absolute;
  width: 0;
  height: 0;
}

.i16 {
  width: 16px;
  height: 16px;
}

.caret {
  display: inline-block;
  border: 3px solid transparent;
  border-top-color: #1e1e1e;
  border-bottom: 0;
  margin-left: 2px;
}

/* title bar */
.titlebar {
  height: 23px;
  flex: none;
  display: grid;
  grid-template-columns: 1fr auto 1fr;
  background: #f0c869;
  border-bottom: 1px solid #c9a455;
}

.quick {
  display: flex;
  align-items: center;
  gap: 7px;
}

.quick .tick + button {
  padding-left: 2px;
}

.tick {
  width: 1px;
  height: 12px;
  background: #8c7a4c;
}

.mini {
  width: 8px;
  height: 8px;
}

.caption {
  font-size: 14px;
  line-height: 24px;
  height: 22px;
  padding-right: 8px;
  color: #3b3323;
}

.window-buttons {
  display: flex;
  justify-content: flex-end;
  align-items: flex-start;
  padding-right: 3px;
}

.window-buttons button {
  width: 26px;
  height: 19px;
}

.window-buttons .close {
  width: 45px;
  background: #c85050;
}

/* ribbon tabs */
.tabs {
  height: 24px;
  flex: none;
  display: flex;
  border-bottom: 1px solid #dadbdc;
}

.tab {
  width: 56px;
  height: 24px;
  padding-top: 2px;
}

.tab.file {
  height: 23px;
  background: #1979ca;
  color: #fff;
}

.tab.active {
  width: 58px;
  height: 24px;
  background: #f5f6f7;
  border: 1px solid #dadbdc;
  border-bottom: 0;
}

.tabs-right {
  margin-left: auto;
  display: flex;
  align-items: center;
  gap: 10px;
  padding-right: 4px;
}

.help {
  width: 14px;
  height: 14px;
  border-radius: 50%;
  background: #1979ca;
  color: #fff;
  font-weight: bold;
}

/* ribbon */
.ribbon {
  height: 92px;
  flex: none;
  display: flex;
  padding: 2px 0;
  background: #f5f6f7;
  border-bottom: 1px solid #dadbdc;
  font-size: 11px;
}

.group {
  display: flex;
  flex-direction: column;
  justify-content: space-between;
  border-right: 1px solid #e2e3e4;
}

.group h2 {
  font-size: 11px;
  line-height: 16px;
  text-align: center;
  color: #8f8f8f;
}

.clipboard { width: 196px; }
.organize { width: 191px; }
.new { width: 145px; }
.open { width: 133px; }
.select { width: 115px; }

.tools {
  display: flex;
  padding: 2px 0 0 5px;
}

.organize .tools,
.new .tools {
  padding-left: 3px;
}

.big {
  width: 42px;
  flex: none;
  flex-direction: column;
  justify-content: flex-start;
  align-items: center;
  align-self: flex-start;
  gap: 4px;
  padding-top: 2px;
  line-height: 13px;
}

.big.wide {
  width: 54px;
}

.big svg {
  width: 32px;
  height: 32px;
}

.big .caret {
  vertical-align: middle;
}

.rule {
  width: 1px;
  margin: 4px 2px 0 4px;
  background: #dfe0e1;
}

.rule ~ .big {
  width: 44px;
}

.stack {
  display: flex;
  flex-direction: column;
  padding-left: 4px;
}

.select .stack {
  padding-left: 2px;
}

.small {
  height: 22px;
  justify-content: flex-start;
  gap: 3px;
  white-space: nowrap;
}

.small svg {
  width: 16px;
  height: 16px;
}

button:disabled {
  color: #8f8f8f;
}

/* address bar */
.addressbar {
  height: 37px;
  flex: none;
  display: flex;
  align-items: center;
  gap: 9px;
  padding: 0 12px 1px 10px;
}

.up {
  padding-left: 4px;
}

.path {
  flex: 1;
  height: 22px;
  display: flex;
  align-items: center;
  margin-left: -2px;
  padding-left: 2px;
  border: 1px solid #d9d9d9;
}

.crumb-arrow {
  margin: 0 9px 0 8px;
  border: 3px solid transparent;
  border-left: 4px solid #777;
  border-right: 0;
}

.history {
  margin-left: auto;
  width: 18px;
  height: 20px;
}

.refresh {
  width: 26px;
  height: 20px;
  border-left: 1px solid #d9d9d9;
}

.search {
  width: 158px;
  height: 22px;
  margin-left: 3px;
  display: flex;
  align-items: center;
  padding: 0 7px 0 8px;
  border: 1px solid #d9d9d9;
}

.search input {
  flex: 1;
  min-width: 0;
  padding: 0;
  border: 0;
  outline: 0;
  font: inherit;
}

.search input::placeholder {
  color: #6d6d6d;
}

/* content */
.content {
  flex: 1;
  min-height: 0;
  display: flex;
}

.sidebar {
  width: 183px;
  flex: none;
  padding: 9px 1px 0;
  border-right: 1px solid #f0f0f0;
  color: #000;
}

.sidebar a {
  height: 21px;
  display: flex;
  align-items: center;
  gap: 5px;
  padding-left: 28px;
  border: 1px solid transparent;
}

.sidebar a.root {
  padding-left: 18px;
}

.sidebar a.root:not(:first-child) {
  margin-top: 21px;
}

.sidebar a.current {
  background: #f7f7f7;
  border-color: #dedede;
}

.sidebar svg {
  width: 16px;
  height: 16px;
}

.files {
  flex: 1;
  min-width: 0;
  position: relative;
  overflow: hidden;
  padding-left: 13px;
}

table {
  width: 580px;
  table-layout: fixed;
  border-collapse: collapse;
  color: #6d6d6d;
}

th {
  height: 31px;
  padding: 0 0 6px 6px;
  font-weight: normal;
  text-align: left;
  color: #4c607a;
  background: linear-gradient(#e3e9f0, #e3e9f0) right top / 1px 22px no-repeat;
}

th.name {
  width: 260px;
  padding-left: 5px;
  background:
    conic-gradient(from 135deg at 50% 0, #5f8fb0 90deg, transparent 0) 126px 1px / 6px 3px no-repeat,
    linear-gradient(#e3e9f0, #e3e9f0) right top / 1px 22px no-repeat;
}

th.date { width: 120px; }
th.type { width: 120px; }
th.size { width: 80px; }

td {
  height: 21px;
  padding: 0 0 0 6px;
  white-space: nowrap;
}

td.date,
td.size {
  font-size: 11px;
}

td.name {
  color: #000;
}

.entry {
  display: flex;
  align-items: center;
  gap: 4px;
}

.entry svg {
  width: 16px;
  height: 16px;
}

td.size {
  padding-right: 8px;
  text-align: right;
}

.selected {
  position: relative;
  background: #d1e8ff;
}

/* red frame round the selected row */
.selected td:first-child::after {
  content: "";
  position: absolute;
  inset: -3px 1px -2px 0;
  border: 5px solid #ee1c23;
}

.watermark {
  position: absolute;
  right: 40px;
  bottom: 10px;
  width: 255px;
  color: #c2c2c2;
  font-size: 14px;
  line-height: 20px;
  white-space: nowrap;
}

.watermark .big-line {
  font-size: 19px;
  line-height: 24px;
}

.scrollbar {
  width: 16px;
  flex: none;
  display: flex;
  flex-direction: column;
  background: #f0f0f0;
}

.scrollbar button {
  height: 17px;
}

.thumb {
  flex: 359;
  margin-right: 1px;
  background: #cdcdcd;
}

.track {
  flex: 136;
}

/* status bar */
.status {
  height: 23px;
  flex: none;
  display: flex;
  align-items: center;
  color: #1e395b;
  font-size: 11px;
}

.status span {
  padding: 0 10px;
  border-right: 1px solid #eee;
}

.status span:first-child {
  padding-left: 14px;
}

.views {
  margin-left: auto;
  display: flex;
  padding-right: 4px;
}

.views button {
  width: 22px;
  height: 23px;
}

.views .on {
  background: #cce8f6;
  border: 1px solid #26a0da;
}

/* taskbar */
.taskbar {
  height: 40px;
  flex: none;
  display: flex;
  gap: 2px;
  position: relative;
}

.taskbar > * {
  position: relative;
}

.taskbar .wallpaper {
  position: absolute;
  width: 100%;
  height: 100%;
}

.start {
  width: 49px;
}

.app {
  width: 60px;
}

.app svg {
  width: 32px;
  height: 32px;
}

.app.running {
  background: rgba(255, 235, 205, 0.25);
  border: 1px solid #8d6424;
  box-shadow: inset 0 0 0 1px #dcc08c;
}

.app.front {
  background: linear-gradient(135deg, #cdb384, #dfd0b4);
  border: 1px solid #8d6424;
  box-shadow: inset 0 0 0 1px #fff;
}

.glyph {
  fill: #fff;
  font-size: 14px;
  font-weight: bold;
}

.tray {
  margin-left: auto;
  display: flex;
  align-items: center;
  gap: 8px;
  padding: 2px 18px 0 0;
  color: #fff;
  font-size: 11px;
}

.tray svg {
  width: 16px;
  height: 16px;
}

.clock {
  width: 50px;
  margin-left: 10px;
  display: flex;
  flex-direction: column;
  align-items: center;
  line-height: 17px;
}
```
